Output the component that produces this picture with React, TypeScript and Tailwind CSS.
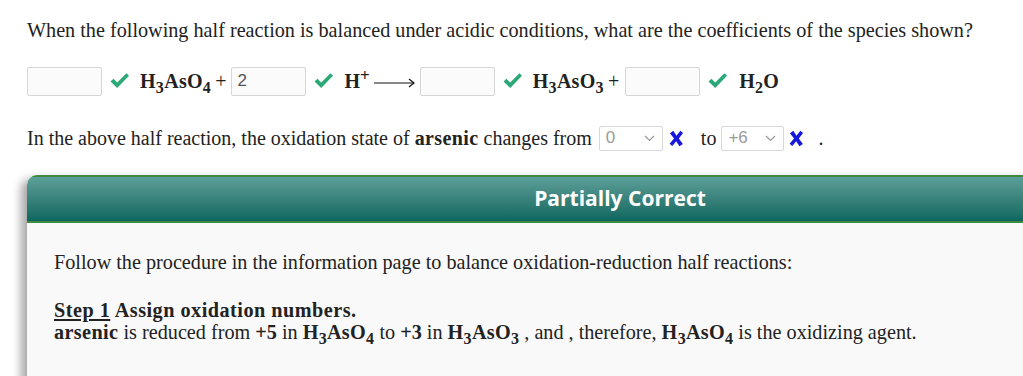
import React from "react";

const serif = { fontFamily: '"Liberation Serif", "Times New Roman", serif' };

function Check() {
  return (
    <svg width="21" height="18" viewBox="0 0 21 18" className="shrink-0">
      <path d="M1.5 9.5 L4.5 6.8 L8.2 10.6 L17.5 1.2 L20 3.8 L8.2 16 Z" fill="#2aa876" />
    </svg>
  );
}

function XMark() {
  return (
    <svg width="15" height="17" viewBox="0 0 14 16" className="shrink-0">
      <path d="M0.8 3 L4 0.8 L7 5.4 L10.6 0.8 L13.2 2.9 L9.2 8 L13 13.2 L9.8 15.2 L6.7 10.6 L3 15.1 L0.5 13 L4.7 7.9 Z" fill="#1616dc" />
    </svg>
  );
}

function Box({ value }: { value?: string }) {
  return (
    <div className="w-[75px] h-[29px] border border-[#d6d6d6] rounded-[2px] bg-[#fbfbfb] flex items-center px-[5px] text-[17px] text-[#555] font-['Liberation_Sans',Arial,sans-serif]">
      {value}
    </div>
  );
}

function Select({ value, w }: { value: string; w: string }) {
  return (
    <div className={`${w} h-[25px] border border-[#d8d8d8] rounded-[2px] bg-white flex items-center justify-between pl-[6px] pr-[7px] text-[17px] text-[#9a9a9a] font-['Liberation_Sans',Arial,sans-serif]`}>
      <span>{value}</span>
      <svg width="11" height="7" viewBox="0 0 11 7">
        <path d="M1 1 L5.5 5.5 L10 1" stroke="#999" strokeWidth="1.2" fill="none" />
      </svg>
    </div>
  );
}

function Formula({ parts }: { parts: (string | [string])[] }) {
  return (
    <span className="font-bold tracking-[0.3px]">
      {parts.map((p, i) =>
        typeof p === "string" ? (
          <span key={i}>{p}</span>
        ) : (
          <span key={i} className="text-[16px] relative top-[5px]">{p[0]}</span>
        )
      )}
    </span>
  );
}

export default function App() {
  return (
    <div className="w-[1023px] h-[376px] overflow-hidden bg-white text-[#222]" style={serif}>
      <div className="pt-[17px] pl-[27px] text-[20.2px] leading-[26px]">
        When the following half reaction is balanced under acidic conditions, what are the coefficients of the species shown?
      </div>
      <div className="flex items-center pl-[27px] mt-[23px] text-[20px] h-[30px]">
        <Box />
        <div className="ml-[7px] mr-[10px]"><Check /></div>
        <Formula parts={["H", ["3"], "AsO", ["4"]]} />
        <span className="ml-[4px] mr-[5px]">+</span>
        <Box value="2" />
        <div className="ml-[7px] mr-[10px]"><Check /></div>
        <span className="font-bold">H<span className="text-[17px] relative top-[-7px]">+</span></span>
        <svg width="42" height="12" viewBox="0 0 42 12" className="ml-[4px] mr-[4px] mt-[3px]">
          <path d="M0 6 L40 6" stroke="#111" strokeWidth="1.2" />
          <path d="M35 2 L40 6 L35 10" stroke="#111" strokeWidth="1.2" fill="none" />
        </svg>
        <Box />
        <div className="ml-[7px] mr-[10px]"><Check /></div>
        <Formula parts={["H", ["3"], "AsO", ["3"]]} />
        <span className="ml-[4px] mr-[6px]">+</span>
        <Box />
        <div className="ml-[7px] mr-[11px]"><Check /></div>
        <Formula parts={["H", ["2"], "O"]} />
      </div>
      <div className="flex items-center pl-[27px] mt-[29px] text-[20px] h-[26px]">
        <span>In the above half reaction, the oxidation state of <b className="tracking-[0.4px]">arsenic</b> changes from</span>
        <div className="ml-[7px]"><Select value="0" w="w-[64px]" /></div>
        <div className="ml-[6px]"><XMark /></div>
        <span className="ml-[17px] mr-[5px]">to</span>
        <Select value="+6" w="w-[63px]" />
        <div className="ml-[5px]"><XMark /></div>
        <span className="ml-[14px]">.</span>
      </div>
      <div className="ml-[27px] mt-[24px] w-[1186px] rounded-tl-[10px] overflow-hidden shadow-[-6px_4px_10px_rgba(0,0,0,0.35)] bg-[#f9f9f9]">
        <div className="h-[48px] border-t-2 border-b-2 border-[#3f8a3c] bg-gradient-to-b from-[#5c9f99] to-[#08675f] flex items-center justify-center">
          <span className="text-white font-bold text-[21px] font-['Open_Sans',Verdana,sans-serif]">Partially Correct</span>
        </div>
        <div className="pl-[27px] pt-[28px] pb-[40px] text-[20.2px] leading-[22px]">
          <div>Follow the procedure in the information page to balance oxidation-reduction half reactions:</div>
          <div className="mt-[26px] font-bold tracking-[0.5px]"><u>Step 1</u> Assign oxidation numbers.</div>
          <div>
            <b className="tracking-[0.4px]">arsenic</b> is reduced from <b>+5</b> in <Formula parts={["H", ["3"], "AsO", ["4"]]} /> to <b>+3</b> in{" "}
            <Formula parts={["H", ["3"], "AsO", ["3"]]} /> , and , therefore, <Formula parts={["H", ["3"], "AsO", ["4"]]} /> is the oxidizing agent.
          </div>
        </div>
      </div>
    </div>
  );
}
